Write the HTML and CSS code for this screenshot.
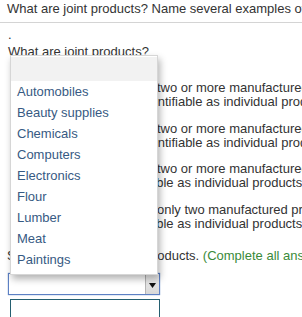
FILE: index.html
```
<!DOCTYPE html>
<html>
<head>
<meta charset="utf-8">
<link rel="stylesheet" href="styles.css">
</head>
<body>
<div class="q-head">What are joint products? Name several examples of joint products.</div>
<div class="content">
  <div class="dot">.</div>
  <div class="prompt">What are joint products?</div>
  <div class="options">
    <div class="opt"><span class="radio"></span><span class="letter">A.</span><span class="txt">Joint products are two or more manufactured products that have relatively significant sales values and<br>that are not yet identifiable as individual products until the splitoff point.</span></div>
    <div class="opt"><span class="radio"></span><span class="letter">B.</span><span class="txt">Joint products are two or more manufactured products that have relatively low sales values and<br>that are not yet identifiable as individual products after the splitoff point.</span></div>
    <div class="opt"><span class="radio"></span><span class="letter">C.</span><span class="txt">Joint products are two or more manufactured products that have significant sales values<br>and never identifiable as individual products until after the splitoff point.</span></div>
    <div class="opt"><span class="radio"></span><span class="letter">D.</span><span class="txt">Joint products are only two manufactured products that have relatively significant sales values<br>and never identifiable as individual products until the splitoff point.</span></div>
  </div>
  <div class="instr">Select some of the joint products. <span class="hint">(Complete all answer boxes.)</span></div>
  <div class="select">
    <span class="sel-val"></span>
    <span class="sel-btn"><svg width="7" height="5" viewBox="0 0 7 5"><path d="M0 0H7L3.5 5Z" fill="#111"/></svg></span>
  </div>
  <div class="textbox"></div>

  <ul class="menu">
    <li class="menu-blank"></li>
    <li>Automobiles</li>
    <li>Beauty supplies</li>
    <li>Chemicals</li>
    <li>Computers</li>
    <li>Electronics</li>
    <li>Flour</li>
    <li>Lumber</li>
    <li>Meat</li>
    <li>Paintings</li>
  </ul>
</div>
</body>
</html>
```
FILE: styles.css
```
html, body {
  margin: 0;
  padding: 0;
  background: #fff;
  overflow: hidden;
}
body {
  font-family: "Liberation Sans", Arial, sans-serif;
  font-size: 13px;
  color: #333;
  width: 302px;
  height: 317px;
  position: relative;
}
.q-head {
  padding: 1px 0 6px 7px;
  line-height: 15px;
  white-space: nowrap;
  border-bottom: 1px solid #d4d4d4;
}
.content {
  padding-left: 8px;
  white-space: nowrap;
}
.dot {
  margin-top: 4px;
  line-height: 16px;
}
.prompt {
  margin-top: 1px;
  line-height: 16px;
}
.options {
  margin-top: 21px;
}
.opt {
  display: grid;
  grid-template-columns: 20px 22px auto;
  line-height: 14px;
  margin-bottom: 12.5px;
}
.opt:last-child {
  margin-bottom: 0;
}
.radio {
  width: 11px;
  height: 11px;
  border: 1px solid #888;
  border-radius: 50%;
  margin: 1px 0 0 6px;
}
.instr {
  margin-top: 18px;
  line-height: 14px;
  margin-left: -1px;
}
.hint {
  color: #3a8a3a;
}
.select {
  margin-top: 10px;
  width: 152px;
  height: 22px;
  box-sizing: border-box;
  border: 1px solid #5d80c4;
  box-shadow: 0 0 1px #5d80c4;
  display: flex;
  justify-content: flex-end;
  background: #fff;
}
.sel-val {
  flex: 1;
}
.sel-btn {
  width: 14px;
  display: flex;
  align-items: center;
  justify-content: center;
  padding-top: 4px;
  box-sizing: border-box;
  background: linear-gradient(#f2f2f2, #d8d8d8);
  border-left: 1px solid #b5b5b5;
}
.textbox {
  margin-top: 4px;
  margin-left: 2px;
  width: 150px;
  height: 30px;
  box-sizing: border-box;
  border: 1px solid #245f70;
}
.menu {
  position: absolute;
  top: 55px;
  left: 10px;
  width: 140px;
  margin: 0;
  padding: 1px 0 4px 6px;
  list-style: none;
  background: #fff;
  border: 1px solid #d6d6d6;
  box-shadow: 2px 4px 7px rgba(0, 0, 0, 0.3);
}
.menu li {
  line-height: 21px;
  height: 21px;
  color: #375a83;
}
.menu .menu-blank {
  height: 24px;
  margin-left: -6px;
  background: #f2f2f2;
}
```
